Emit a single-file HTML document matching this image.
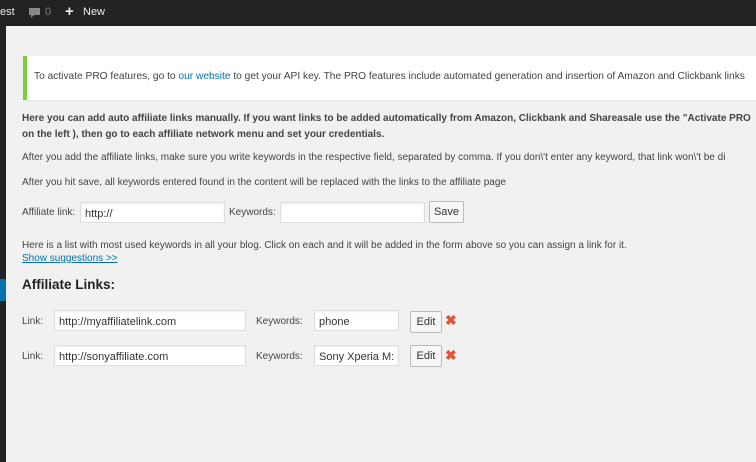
<!DOCTYPE html>
<html><head><meta charset="utf-8"><style>
*{box-sizing:border-box;margin:0;padding:0}
body{width:756px;height:462px;overflow:hidden;background:#f1f1f1;font-family:"Liberation Sans",sans-serif;color:#444;font-size:10px;position:relative}
.a{position:absolute;white-space:nowrap}
.bar{left:0;top:0;width:756px;height:26px;background:#222;color:#eee;font-size:11px}
.side{left:0;top:26px;width:6px;height:436px;background:#222}
.inp{position:absolute;background:#fff;border:1px solid #ddd;box-shadow:inset 0 1px 2px rgba(0,0,0,.07);font-size:11px;color:#333;padding:5px 4px 0;height:21px;line-height:13px;white-space:nowrap;overflow:hidden}
.btn{position:absolute;background:#f7f7f7;border:1px solid #bbb;border-radius:2px;font-size:11px;color:#333;text-align:center;height:22px;line-height:20px}
.x{position:absolute;color:#e0553a;font-weight:bold;font-size:14px}
</style></head><body>
<div class="a bar">
<span class="a" style="left:0;top:6px">est</span>
<svg class="a" style="left:28px;top:7px" width="13" height="12"><path d="M1 1h11v7H6l-3 3V8H1z" fill="#888"/></svg>
<span class="a" style="left:45px;top:6px;color:#888">0</span>
<span class="a" style="left:65px;top:3px;font-size:15px;font-weight:bold">+</span>
<span class="a" style="left:83px;top:6px">New</span>
</div>
<div class="a side"></div>
<div class="a" style="left:0;top:279px;width:6px;height:22px;background:#0073aa"></div>
<div class="a" style="left:23px;top:56px;width:740px;height:44px;background:#fff;border-left:4px solid #7ad03a;box-shadow:0 1px 1px rgba(0,0,0,.05)"></div>
<div class="a" style="left:34px;top:71px;font-size:10.2px">To activate PRO features, go to <span style="color:#0073aa">our website</span> to get your API key. The PRO features include automated generation and insertion of Amazon and Clickbank links</div>
<div class="a" style="left:22px;top:111px;font-weight:bold;line-height:16px">Here you can add auto affiliate links manually. If you want links to be added automatically from Amazon, Clickbank and Shareasale use the "Activate PRO<br>on the left ), then go to each affiliate network menu and set your credentials.</div>
<div class="a" style="left:22px;top:152px">After you add the affiliate links, make sure you write keywords in the respective field, separated by comma. If you don\'t enter any keyword, that link won\'t be di</div>
<div class="a" style="left:22px;top:177px">After you hit save, all keywords entered found in the content will be replaced with the links to the affiliate page</div>
<div class="a" style="left:22px;top:207px">Affiliate link:</div>
<div class="inp" style="left:80px;top:202px;width:145px">http://</div>
<div class="a" style="left:229px;top:207px">Keywords:</div>
<div class="inp" style="left:280px;top:202px;width:145px"></div>
<div class="btn" style="left:429px;top:201px;width:35px">Save</div>
<div class="a" style="left:22px;top:240px">Here is a list with most used keywords in all your blog. Click on each and it will be added in the form above so you can assign a link for it.</div>
<div class="a" style="left:22px;top:253px;color:#0073aa;text-decoration:underline">Show suggestions &gt;&gt;</div>
<div class="a" style="left:22px;top:277px;font-size:13.5px;font-weight:bold;color:#222">Affiliate Links:</div>
<div class="a" style="left:22px;top:316px">Link:</div>
<div class="inp" style="left:54px;top:310px;width:192px">http://myaffiliatelink.com</div>
<div class="a" style="left:256px;top:316px">Keywords:</div>
<div class="inp" style="left:314px;top:310px;width:85px">phone</div>
<div class="btn" style="left:410px;top:311px;width:32px">Edit</div>
<div class="x" style="left:445px;top:312px">✖</div>
<div class="a" style="left:22px;top:351px">Link:</div>
<div class="inp" style="left:54px;top:345px;width:192px">http://sonyaffiliate.com</div>
<div class="a" style="left:256px;top:351px">Keywords:</div>
<div class="inp" style="left:314px;top:345px;width:85px">Sony Xperia M:</div>
<div class="btn" style="left:410px;top:345px;width:32px">Edit</div>
<div class="x" style="left:445px;top:347px">✖</div>
</body></html>
